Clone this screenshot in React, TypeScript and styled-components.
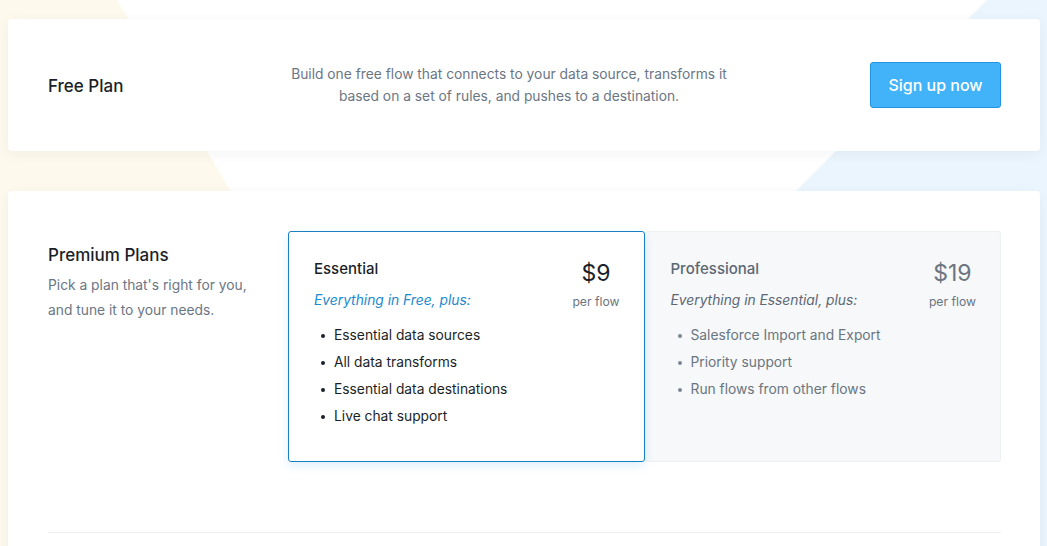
import React from "react";
import styled, { createGlobalStyle } from "styled-components";

const GlobalStyle = createGlobalStyle`
  html, body {
    margin: 0;
    padding: 0;
    background: #fff;
    font-family: Inter, "Noto Sans", "Liberation Sans", sans-serif;
    -webkit-font-smoothing: antialiased;
  }
  * { box-sizing: border-box; }
`;

const Page = styled.div`
  position: relative;
  height: 546px;
  overflow: hidden;
  padding: 19px 7px 0 8px;

  &::before,
  &::after {
    content: "";
    position: absolute;
    inset: 0;
    z-index: 0;
  }
  &::before {
    background: #fdf9ec;
    clip-path: polygon(0 0, 117px 0, 442px 546px, 0 546px);
  }
  &::after {
    background: #eaf5fd;
    clip-path: polygon(987px 0, 1047px 0, 1047px 546px, 441px 546px);
  }
`;

const Card = styled.section`
  position: relative;
  z-index: 1;
  background: #fff;
  border-radius: 4px;
  box-shadow: 0 3px 14px rgba(20, 40, 70, 0.05);
`;

const FreeCard = styled(Card)`
  height: 132px;
  padding: 0 39px 0 40px;
  display: grid;
  grid-template-columns: 236px 450px 1fr;
  align-items: center;
`;

const PlanHeading = styled.h2`
  margin: 0;
  font-size: 17px;
  line-height: 24px;
  font-weight: 500;
  color: #1b1f27;
`;

const FreeHeading = styled(PlanHeading)`
  margin-top: 2px;
`;

const FreeText = styled.p`
  margin: 0;
  text-align: center;
  font-size: 13.8px;
  line-height: 22px;
  color: #6b7685;
`;

const SignUp = styled.button`
  justify-self: end;
  width: 131px;
  height: 46px;
  background: #42b3f9;
  border: 1px solid #1f96df;
  border-radius: 3px;
  color: #fff;
  font-family: inherit;
  font-size: 16px;
  font-weight: 500;
  cursor: pointer;
`;

const PremiumCard = styled(Card)`
  margin-top: 40px;
  min-height: 400px;
  padding: 40px 39px 0 40px;
`;

const PremiumGrid = styled.div`
  display: grid;
  grid-template-columns: 240px 1fr 1fr;
  height: 231px;
`;

const Intro = styled.div`
  padding-top: 12px;
`;

const IntroText = styled.p`
  margin: 6px 0 0;
  font-size: 13.8px;
  line-height: 25px;
  color: #6b7685;
`;

const Tier = styled.div<{ $active?: boolean }>`
  position: relative;
  z-index: ${(p) => (p.$active ? 2 : 1)};
  padding: 26px 24px 26px 25px;
  border-radius: 3px;
  border: 1px solid ${(p) => (p.$active ? "#1a7fc1" : "#eef1f4")};
  background: ${(p) => (p.$active ? "#fff" : "#f6f8fa")};
  box-shadow: ${(p) => (p.$active ? "0 4px 10px rgba(30, 150, 225, 0.14)" : "none")};
`;

const TierHead = styled.div`
  display: flex;
  justify-content: space-between;
  align-items: flex-start;
`;

const TierName = styled.h3<{ $muted?: boolean }>`
  margin: 0;
  font-size: 15px;
  line-height: 21px;
  font-weight: 500;
  color: ${(p) => (p.$muted ? "#5d6774" : "#1b1f27")};
`;

const TierTag = styled.p<{ $muted?: boolean }>`
  margin: 11px 0 0;
  font-size: 13.8px;
  line-height: 20px;
  font-style: italic;
  color: ${(p) => (p.$muted ? "#5d6774" : "#1a8ad0")};
`;

const PriceBox = styled.div`
  display: flex;
  flex-direction: column;
  align-items: center;
  padding-top: 1px;
`;

const Price = styled.div<{ $muted?: boolean }>`
  font-size: 23px;
  line-height: 28px;
  color: ${(p) => (p.$muted ? "#6b7580" : "#1b1f27")};
`;

const PerFlow = styled.div`
  margin-top: 6px;
  font-size: 12.2px;
  line-height: 18px;
  color: #6b7580;
`;

const Features = styled.ul`
  list-style: none;
  margin: 11px 0 0;
  padding: 0;
`;

const Feature = styled.li<{ $muted?: boolean }>`
  display: flex;
  align-items: center;
  font-size: 13.8px;
  line-height: 27px;
  color: ${(p) => (p.$muted ? "#6b7580" : "#1b1f27")};

  &::before {
    content: "";
    width: 4px;
    height: 4px;
    border-radius: 50%;
    margin: 0 9px 0 7px;
    background: ${(p) => (p.$muted ? "#7d8692" : "#1b1f27")};
  }
`;

const Divider = styled.hr`
  margin: 70px 0 0;
  border: 0;
  border-top: 1px solid #eceef1;
`;

type Plan = {
  name: string;
  price: string;
  tag: string;
  items: string[];
  active?: boolean;
};

const plans: Plan[] = [
  {
    name: "Essential",
    price: "$9",
    tag: "Everything in Free, plus:",
    items: [
      "Essential data sources",
      "All data transforms",
      "Essential data destinations",
      "Live chat support",
    ],
    active: true,
  },
  {
    name: "Professional",
    price: "$19",
    tag: "Everything in Essential, plus:",
    items: [
      "Salesforce Import and Export",
      "Priority support",
      "Run flows from other flows",
    ],
  },
];

export default function App() {
  return (
    <>
      <GlobalStyle />
      <Page>
        <FreeCard>
          <FreeHeading>Free Plan</FreeHeading>
          <FreeText>
            Build one free flow that connects to your data source, transforms it
            based on a set of rules, and pushes to a destination.
          </FreeText>
          <SignUp>Sign up now</SignUp>
        </FreeCard>

        <PremiumCard>
          <PremiumGrid>
            <Intro>
              <PlanHeading>Premium Plans</PlanHeading>
              <IntroText>
                Pick a plan that's right for you,
                <br />
                and tune it to your needs.
              </IntroText>
            </Intro>
            {plans.map((plan) => {
              const muted = !plan.active;
              return (
                <Tier key={plan.name} $active={plan.active}>
                  <TierHead>
                    <div>
                      <TierName $muted={muted}>{plan.name}</TierName>
                      <TierTag $muted={muted}>{plan.tag}</TierTag>
                    </div>
                    <PriceBox>
                      <Price $muted={muted}>{plan.price}</Price>
                      <PerFlow>per flow</PerFlow>
                    </PriceBox>
                  </TierHead>
                  <Features>
                    {plan.items.map((item) => (
                      <Feature key={item} $muted={muted}>
                        {item}
                      </Feature>
                    ))}
                  </Features>
                </Tier>
              );
            })}
          </PremiumGrid>
          <Divider />
        </PremiumCard>
      </Page>
    </>
  );
}
